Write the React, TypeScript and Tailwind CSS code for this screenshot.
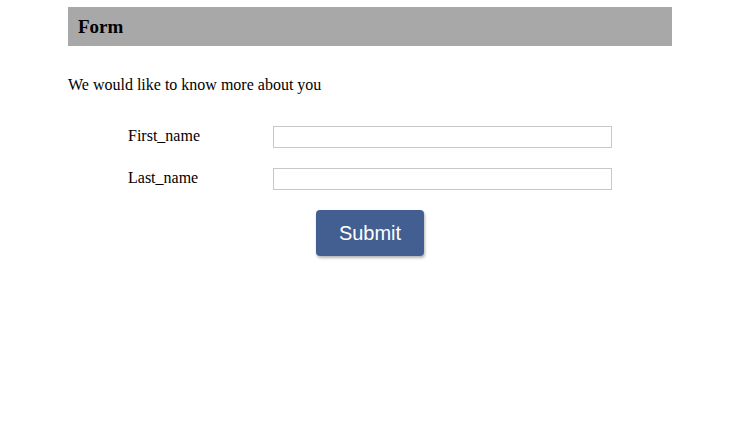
const serif = { fontFamily: '"Liberation Serif", "Times New Roman", serif' };

export default function App() {
  return (
    <div className="min-h-[430px] bg-white text-black" style={serif}>
      <div className="ml-[68px] w-[604px] pt-[7px]">
        <div className="flex h-[39px] items-center bg-[#a8a8a8] px-[10px]">
          <h1 className="text-[19px] font-bold leading-none">Form</h1>
        </div>

        <p className="mt-[29px] text-[16px] leading-[20px]">We would like to know more about you</p>

        <form className="mt-[31px]" onSubmit={(e) => e.preventDefault()}>
          <div className="flex items-start">
            <label className="w-[205px] pl-[60px] text-[16px] leading-[20px]">First_name</label>
            <input className="h-[22px] w-[339px] border border-[#c8c8c8] bg-white px-1 outline-none" />
          </div>
          <div className="mt-[20px] flex items-start">
            <label className="w-[205px] pl-[60px] text-[16px] leading-[20px]">Last_name</label>
            <input className="h-[22px] w-[339px] border border-[#c8c8c8] bg-white px-1 outline-none" />
          </div>
          <div className="mt-[20px] pl-[248px]">
            <button
              type="submit"
              className="h-[46px] w-[108px] rounded-[4px] bg-[#435f91] text-[20px] text-white shadow-[1px_2px_3px_rgba(0,0,0,0.3)]"
              style={{ fontFamily: '"Liberation Sans", Arial, sans-serif' }}
            >
              Submit
            </button>
          </div>
        </form>
      </div>
    </div>
  );
}
